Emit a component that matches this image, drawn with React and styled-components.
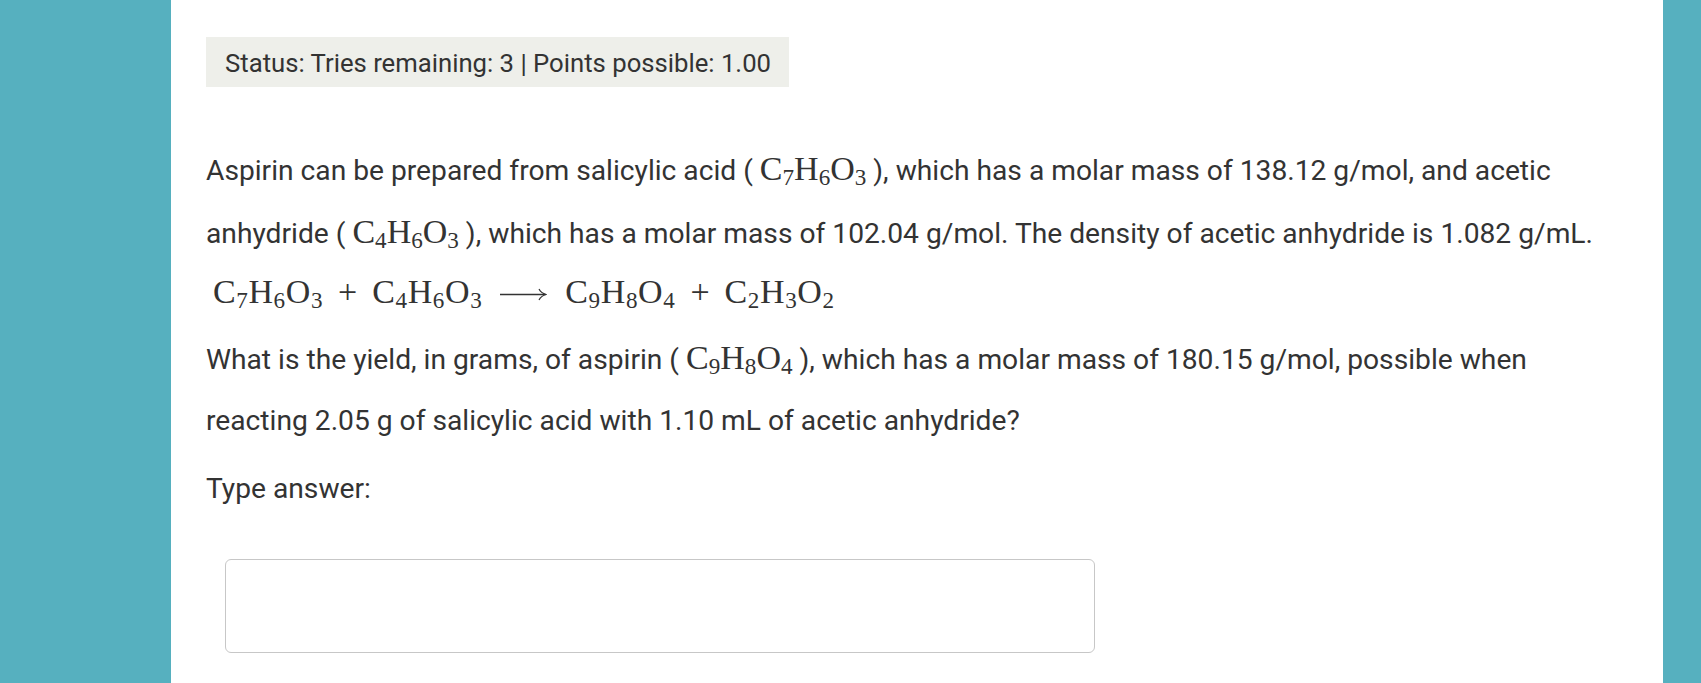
import React from 'react'
import styled, {createGlobalStyle} from 'styled-components'

const GlobalStyle = createGlobalStyle`
  html, body {
    margin: 0;
    padding: 0;
  }
  body {
    background: #56b0bf;
    font-family: Roboto, 'Noto Sans', sans-serif;
    color: #333;
  }
`

const parseFormula = f => {
  const parts = []
  f.replace(/([A-Z][a-z]?)(\d*)/g, (m, el, n) => {
    parts.push([el, n])
    return m
  })
  return parts
}

const Formula = ({f}) => (
  <MathSpan>
    {parseFormula(f).map(([el, n], i) => (
      <React.Fragment key={i}>
        {el}
        {n && <Sub>{n}</Sub>}
      </React.Fragment>
    ))}
  </MathSpan>
)

const Arrow = () => (
  <ArrowBox width="47" height="14" viewBox="0 0 47 14">
    <path d="M0 7.5 H45.5" stroke="#333" strokeWidth="1.3" fill="none" />
    <path d="M39 2 Q41 6 46 7.5 Q41 9 39 13" stroke="#333" strokeWidth="1.2" fill="none" />
  </ArrowBox>
)

export default function App() {
  return (
    <>
      <GlobalStyle />
      <Page>
        <Status>Status: Tries remaining: 3 | Points possible: 1.00</Status>
        <Question>
          <Para>
            Aspirin can be prepared from salicylic acid ( <Formula f="C7H6O3" /> ), which has a molar
            mass of 138.12 g/mol, and acetic anhydride ( <Formula f="C4H6O3" /> ), which has a molar
            mass of 102.04 g/mol. The density of acetic anhydride is 1.082 g/mL.
          </Para>
          <Equation>
            <Formula f="C7H6O3" />
            <Op>+</Op>
            <Formula f="C4H6O3" />
            <Arrow />
            <Formula f="C9H8O4" />
            <Op>+</Op>
            <Formula f="C2H3O2" />
          </Equation>
          <Para>
            What is the yield, in grams, of aspirin ( <Formula f="C9H8O4" /> ), which has a molar mass
            of 180.15 g/mol, possible when reacting 2.05 g of salicylic acid with 1.10 mL of acetic
            anhydride?
          </Para>
          <Label>Type answer:</Label>
          <AnswerInput type="text" />
        </Question>
      </Page>
    </>
  )
}

const Page = styled.div`
  margin-left: 171px;
  width: 1492px;
  min-height: 683px;
  background: #fff;
  box-sizing: border-box;
  padding: 37px 35px 0 35px;
`

const Status = styled.div`
  display: inline-block;
  height: 50px;
  line-height: 50px;
  padding: 1px 18px 0 19px;
  box-sizing: border-box;
  background: #eeefea;
  font-size: 25.7px;
  color: #333;
`

const Question = styled.div`
  width: 1410px;
  margin-top: 52px;
  font-size: 28.2px;
  line-height: 60px;
`

const Para = styled.p`
  margin: 0;
`

const MathSpan = styled.span`
  font-family: 'Liberation Serif', 'DejaVu Serif', serif;
  font-size: 34px;
  white-space: nowrap;
`

const Sub = styled.span`
  font-size: 0.68em;
  position: relative;
  top: 0.2em;
`

const Equation = styled.div`
  padding-left: 7px;
  margin: 5px 0 11px 0;
  line-height: 44px;
  white-space: nowrap;

  ${MathSpan} {
    letter-spacing: 0.6px;
  }
`

const Op = styled.span`
  font-family: 'Liberation Serif', 'DejaVu Serif', serif;
  font-size: 34px;
  margin: 0 15px;
`

const ArrowBox = styled.svg`
  margin: 0 18px;
  vertical-align: 2px;
`

const Label = styled.p`
  margin: 8px 0 0 0;
`

const AnswerInput = styled.input`
  display: block;
  margin: 40px 0 0 19px;
  width: 870px;
  height: 94px;
  box-sizing: border-box;
  border: 1px solid #c7c7c7;
  border-radius: 6px;
  background: #fff;
  outline: none;
`
